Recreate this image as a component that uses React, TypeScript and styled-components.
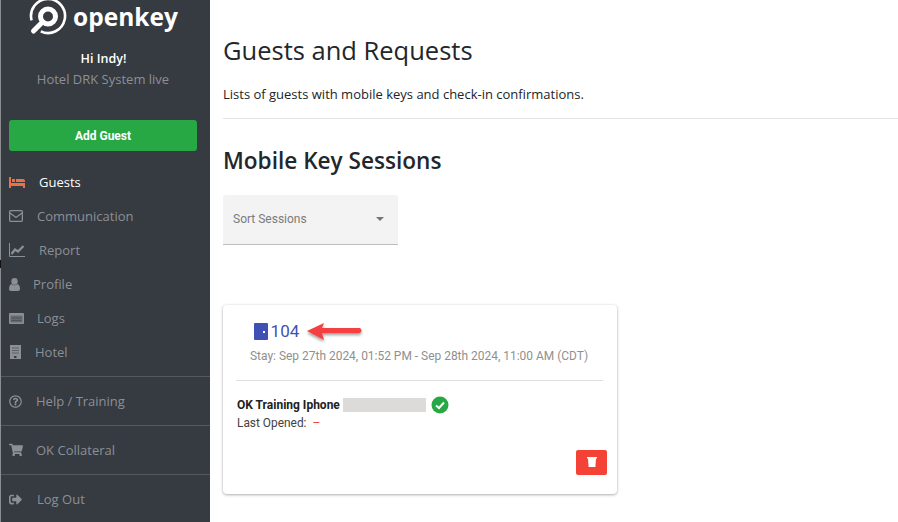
import React from "react";
import styled, { createGlobalStyle } from "styled-components";
import { FaRegQuestionCircle, FaShoppingCart, FaSignOutAlt } from "react-icons/fa";

const Global = createGlobalStyle`
  html, body { margin: 0; padding: 0; background: #fff; }
  body { width: 898px; height: 522px; overflow: hidden; font-family: "Open Sans", sans-serif; }
  * { box-sizing: border-box; }
`;

const Page = styled.div`
  display: flex;
  width: 898px;
  height: 522px;
  overflow: hidden;
`;

const Sidebar = styled.aside`
  flex: 0 0 210px;
  height: 522px;
  background: #363a41;
  border-left: 1px solid #8b8d90;
  display: flex;
  flex-direction: column;
  font-family: "Open Sans", sans-serif;
  position: relative;
  & > * { flex-shrink: 0; }
  &::before {
    content: "";
    position: absolute;
    left: -1px;
    top: 260px;
    width: 1px;
    height: 8px;
    background: #111;
  }
`;

const Logo = styled.div`
  display: flex;
  align-items: center;
  gap: 7px;
  height: 36px;
  padding-left: 27px;
  color: #fff;
  svg { overflow: visible; flex: none; }
`;

const LogoText = styled.span`
  font-family: "Open Sans", sans-serif;
  font-weight: 700;
  font-size: 24.5px;
  line-height: 34px;
  margin-top: -3px;
`;

const Greeting = styled.div`
  margin-top: 14px;
  text-align: center;
  font-size: 12.5px;
  line-height: 18px;
  font-weight: 600;
  color: #fff;
  padding-right: 4px;
`;

const Property = styled.div`
  margin-top: 2px;
  text-align: center;
  font-size: 13px;
  line-height: 18px;
  color: #8c9096;
  padding-right: 5px;
`;

const AddGuest = styled.button`
  display: block;
  margin: 32px 13px 0 8px;
  height: 31px;
  border: 0;
  border-radius: 3px;
  background: #28a745;
  color: #fff;
  font-family: Roboto, sans-serif;
  font-size: 12px;
  font-weight: 700;
  padding: 0;
`;

const Nav = styled.nav`
  margin-top: 14px;
  display: flex;
  flex-direction: column;
`;

const NavItem = styled.div<{ $active?: boolean; $gap: number }>`
  height: 34px;
  display: flex;
  align-items: center;
  padding-left: 8px;
  gap: ${(p) => p.$gap}px;
  font-size: 13px;
  color: ${(p) => (p.$active ? "#fff" : "#8c9096")};
  svg { color: ${(p) => (p.$active ? "#ee7044" : "#8c9096")}; flex: none; }
`;

const Divided = styled.div`
  border-top: 1px solid #55585e;
  height: 49px;
  flex: none;
  display: flex;
  align-items: center;
`;

const Extras = styled.div`
  margin-top: 7px;
  display: flex;
  flex-direction: column;
`;

const Main = styled.main`
  flex: 1;
  padding: 34px 0 0 13px;
  color: #212529;
`;

const Title = styled.h1`
  margin: 0;
  font-size: 25.5px;
  line-height: 32px;
  font-weight: 400;
  color: #23272b;
`;

const Lead = styled.p`
  margin: 20px 0 0;
  font-size: 13px;
  line-height: 17px;
  color: #212529;
`;

const Rule = styled.hr`
  margin: 15px 0 0;
  border: 0;
  border-top: 1px solid #e4e4e4;
`;

const Section = styled.h2`
  margin: 26px 0 0;
  font-size: 22.6px;
  line-height: 32px;
  font-weight: 600;
  color: #23272b;
`;

const Select = styled.div`
  margin-top: 18px;
  width: 175px;
  height: 50px;
  background: #f3f3f3;
  border-radius: 3px 3px 0 0;
  border-bottom: 1.5px solid #bdbdbd;
  display: flex;
  align-items: center;
  justify-content: space-between;
  padding: 0 14px 2px 10px;
  font-family: Roboto, sans-serif;
  font-size: 12px;
  color: #7b7b7b;
`;

const Caret = styled.span`
  width: 0;
  height: 0;
  border-left: 4.5px solid transparent;
  border-right: 4.5px solid transparent;
  border-top: 4.5px solid #757575;
`;

const Card = styled.section`
  margin-top: 60px;
  width: 394px;
  height: 189px;
  background: #fff;
  border-radius: 4px;
  box-shadow: 0 1px 3px rgba(0, 0, 0, 0.3), 0 0 3px rgba(0, 0, 0, 0.06);
  padding: 14px 14px 0 13px;
  font-family: Roboto, sans-serif;
  position: relative;
`;

const Room = styled.div`
  display: flex;
  align-items: center;
  padding-left: 18px;
  height: 24px;
  gap: 2.6px;
  font-size: 17px;
  color: #3f51b5;
`;

const Stay = styled.div`
  margin-top: 5px;
  padding-left: 14px;
  font-size: 11.96px;
  line-height: 16px;
  color: #8f8f8f;
`;

const CardRule = styled.hr`
  margin: 16px 0 0;
  border: 0;
  border-top: 1px solid #e0e0e0;
`;

const Device = styled.div`
  margin-top: 15px;
  padding-left: 1px;
  height: 18px;
  display: flex;
  align-items: center;
  font-size: 12px;
  font-weight: 700;
  color: #212121;
`;

const Redacted = styled.span`
  width: 83px;
  height: 14px;
  margin: 0 5px 0 3px;
  background: #dcdbda;
`;

const Opened = styled.div`
  margin-top: 1px;
  padding-left: 1px;
  font-size: 11.9px;
  line-height: 16px;
  color: #424242;
  span { color: #f44336; margin-left: 6px; }
`;

const Delete = styled.button`
  position: absolute;
  right: 10px;
  bottom: 19px;
  width: 31px;
  height: 25px;
  border: 0;
  border-radius: 2px;
  background: #f44336;
  display: flex;
  align-items: center;
  justify-content: center;
  padding: 0 0 2px;
`;

const ArrowMark = styled.svg`
  position: absolute;
  left: 84px;
  top: 15px;
  overflow: visible;
`;

const BedIcon = () => (
  <svg width="16" height="11" viewBox="0 0 16 11" fill="currentColor">
    <rect x="0" y="0" width="2" height="11" />
    <rect x="3" y="2" width="3" height="3" />
    <path d="M7 2 H14 Q16 2 16 4 V11 H14 V9 H2 V6 H16 V5 H7 Z" />
  </svg>
);

const EnvelopeIcon = () => (
  <svg width="14" height="12" viewBox="0 0 14 12" fill="none" stroke="currentColor" strokeWidth="1.3">
    <rect x="0.65" y="0.65" width="12.7" height="10.7" rx="1" />
    <path d="M1 3 L7 7.5 L13 3" />
  </svg>
);

const ChartIcon = () => (
  <svg width="16" height="14" viewBox="0 0 16 14" fill="none" stroke="currentColor">
    <path d="M0.5 0 V13.5 H16" strokeWidth="1" />
    <path d="M2.5 11 L6 6.5 L9 8.5 L14.5 3" strokeWidth="2.2" />
  </svg>
);

const UserIcon = () => (
  <svg width="11" height="13" viewBox="0 0 11 13" fill="currentColor">
    <ellipse cx="5.5" cy="3.4" rx="3.2" ry="3.4" />
    <path d="M2.5 6 Q5.5 8.5 8.5 6 Q11 7 11 11 Q11 13 9 13 H2 Q0 13 0 11 Q0 7 2.5 6 Z" />
  </svg>
);

const LogsIcon = () => (
  <svg width="15" height="11" viewBox="0 0 15 11">
    <rect width="15" height="11" rx="1" fill="currentColor" />
    <rect x="1.5" y="2.5" width="12" height="7" fill="#686c72" />
    <rect x="2.5" y="4.5" width="10" height="1" fill="#4f5359" />
    <rect x="2.5" y="7" width="10" height="1" fill="#4f5359" />
  </svg>
);

const HotelIcon = () => (
  <svg width="12" height="14" viewBox="0 0 12 14">
    <rect x="1" y="0" width="11" height="14" fill="currentColor" />
    <rect x="3" y="2.5" width="7" height="1" fill="#5d6167" />
    <rect x="3" y="5" width="7" height="1" fill="#5d6167" />
    <rect x="3" y="7.5" width="7" height="1" fill="#5d6167" />
    <rect x="5" y="11" width="2.5" height="2" fill="#363a41" />
  </svg>
);

const items = [
  { label: "Guests", Icon: BedIcon, gap: 14, active: true },
  { label: "Communication", Icon: EnvelopeIcon, gap: 14 },
  { label: "Report", Icon: ChartIcon, gap: 14 },
  { label: "Profile", Icon: UserIcon, gap: 13 },
  { label: "Logs", Icon: LogsIcon, gap: 13 },
  { label: "Hotel", Icon: HotelIcon, gap: 14 },
];

const extras = [
  { label: "Help / Training", Icon: FaRegQuestionCircle, size: 13, gap: 14 },
  { label: "OK Collateral", Icon: FaShoppingCart, size: 14, gap: 13 },
  { label: "Log Out", Icon: FaSignOutAlt, size: 13, gap: 15 },
];

export default function App() {
  return (
    <Page>
      <Global />
      <Sidebar>
        <Logo>
          <svg width="38" height="36" viewBox="0 0 38 36" fill="none" stroke="#fff">
            <path d="M3.6 20.4 A17 17 0 1 1 12.8 31.4" strokeWidth="2.6" />
            <circle cx="20" cy="16.5" r="7.5" strokeWidth="5" />
            <path d="M13 23.5 L5.5 31" strokeWidth="5" strokeLinecap="round" />
          </svg>
          <LogoText>openkey</LogoText>
        </Logo>
        <Greeting>Hi Indy!</Greeting>
        <Property>Hotel DRK System live</Property>
        <AddGuest>Add Guest</AddGuest>
        <Nav>
          {items.map(({ label, Icon, gap, active }) => (
            <NavItem key={label} $active={active} $gap={gap}>
              <Icon />
              {label}
            </NavItem>
          ))}
        </Nav>
        <Extras>
          {extras.map(({ label, Icon, size, gap }) => (
            <Divided key={label}>
              <NavItem $gap={gap}>
                <Icon size={size} />
                {label}
              </NavItem>
            </Divided>
          ))}
        </Extras>
      </Sidebar>
      <Main>
        <Title>Guests and Requests</Title>
        <Lead>Lists of guests with mobile keys and check-in confirmations.</Lead>
        <Rule />
        <Section>Mobile Key Sessions</Section>
        <Select>
          Sort Sessions
          <Caret />
        </Select>
        <Card>
          <Room>
            <svg width="14" height="17" viewBox="0 0 14 17">
              <rect width="14" height="17" rx="1" fill="#3f51b5" />
              <rect x="9" y="8" width="2" height="2" fill="#fff" />
            </svg>
            104
          </Room>
          <ArrowMark width="56" height="24" viewBox="0 0 56 24">
            <defs>
              <filter id="s" x="-10%" y="-30%" width="120%" height="180%">
                <feDropShadow dx="0" dy="2" stdDeviation="1.5" floodColor="#000" floodOpacity="0.4" />
              </filter>
            </defs>
            <path d="M0 11 L17 3 L15 8 H53 Q56 10.5 53 13 H15 L17 20 Z" fill="#f44040" filter="url(#s)" />
          </ArrowMark>
          <Stay>Stay: Sep 27th 2024, 01:52 PM - Sep 28th 2024, 11:00 AM (CDT)</Stay>
          <CardRule />
          <Device>
            OK Training Iphone
            <Redacted />
            <svg width="18" height="18" viewBox="0 0 18 18">
              <circle cx="9" cy="9" r="8.5" fill="#28a745" />
              <path d="M5 9.5 L8 12 L13 6.5" fill="none" stroke="#fff" strokeWidth="2" />
            </svg>
          </Device>
          <Opened>
            Last Opened:<span>–</span>
          </Opened>
          <Delete aria-label="Delete">
            <svg width="10" height="10" viewBox="0 0 10 10">
              <path d="M0 0 H10 V1.5 H9 L8.4 10 H1.6 L1 1.5 H0 Z" fill="#fff" />
            </svg>
          </Delete>
        </Card>
      </Main>
    </Page>
  );
}
